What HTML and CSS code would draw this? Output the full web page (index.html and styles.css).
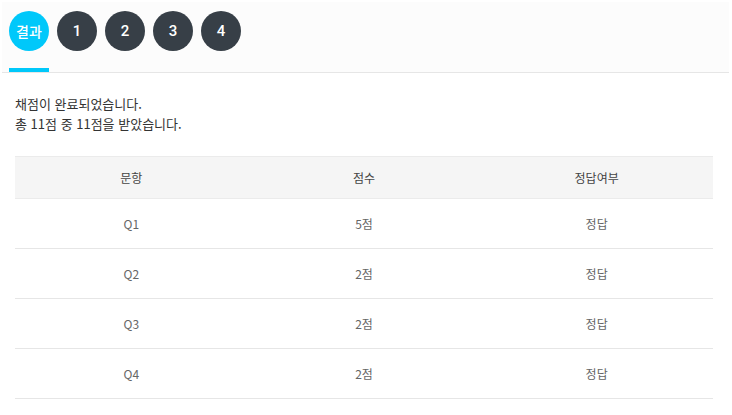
FILE: index.html
```html
<!DOCTYPE html>
<html lang="ko">
<head>
<meta charset="utf-8">
<link rel="stylesheet" href="styles.css">
</head>
<body>
<div class="page">
  <div class="tabs">
    <div class="tab active"><span class="dot">결과</span><span class="bar"></span></div>
    <div class="tab"><span class="dot">1</span><span class="bar"></span></div>
    <div class="tab"><span class="dot">2</span><span class="bar"></span></div>
    <div class="tab"><span class="dot">3</span><span class="bar"></span></div>
    <div class="tab"><span class="dot">4</span><span class="bar"></span></div>
  </div>
  <div class="content">
    <p class="msg">채점이 완료되었습니다.<br>총 11점 중 11점을 받았습니다.</p>
    <table class="result">
      <thead>
        <tr><th>문항</th><th>점수</th><th>정답여부</th></tr>
      </thead>
      <tbody>
        <tr><td>Q1</td><td>5점</td><td>정답</td></tr>
        <tr><td>Q2</td><td>2점</td><td>정답</td></tr>
        <tr><td>Q3</td><td>2점</td><td>정답</td></tr>
        <tr><td>Q4</td><td>2점</td><td>정답</td></tr>
      </tbody>
    </table>
  </div>
</div>
</body>
</html>
```

FILE: styles.css
```css
html, body { margin: 0; padding: 0; background: #fff; }
body {
  font-family: "Noto Sans CJK KR", "Noto Sans", sans-serif;
  color: #333;
}
.page { padding: 2px 3px 0 2px; }
.tabs {
  display: flex;
  gap: 8px;
  padding: 9px 7px 0 7px;
  background: #fcfcfc;
  border-bottom: 1px solid #e6e6e6;
}
.tab {
  display: flex;
  flex-direction: column;
  align-items: center;
  width: 40px;
}
.dot {
  width: 40px;
  height: 40px;
  border-radius: 50%;
  background: #373f47;
  color: #fff;
  font-family: "Roboto", "Noto Sans CJK KR", sans-serif;
  font-weight: 500;
  font-size: 15px;
  display: flex;
  align-items: center;
  justify-content: center;
}
.tab.active .dot {
  background: #00c8fa;
  font-family: "Noto Sans CJK KR", sans-serif;
  font-weight: 500;
  font-size: 14px;
}
.bar {
  display: block;
  width: 40px;
  height: 4px;
  margin-top: 17px;
}
.tab.active .bar { background: #00c8fa; }
.content { padding: 0 16px 0 13px; }
.msg {
  margin: 21px 0 0 0;
  font-size: 13px;
  line-height: 20px;
  color: #333;
}
.result {
  width: 100%;
  margin-top: 22px;
  border-collapse: collapse;
  font-size: 12px;
  color: #555;
}
.result th, .result td {
  width: 33.33%;
  text-align: center;
  font-weight: 400;
  padding: 0;
}
.result thead tr {
  background: #f5f5f5;
  border-top: 1px solid #ebebeb;
  border-bottom: 1px solid #ebebeb;
}
.result th { height: 41px; color: #444; }
.result tbody tr { border-bottom: 1px solid #e6e6e6; }
.result td { height: 49px; color: #666; }
```
